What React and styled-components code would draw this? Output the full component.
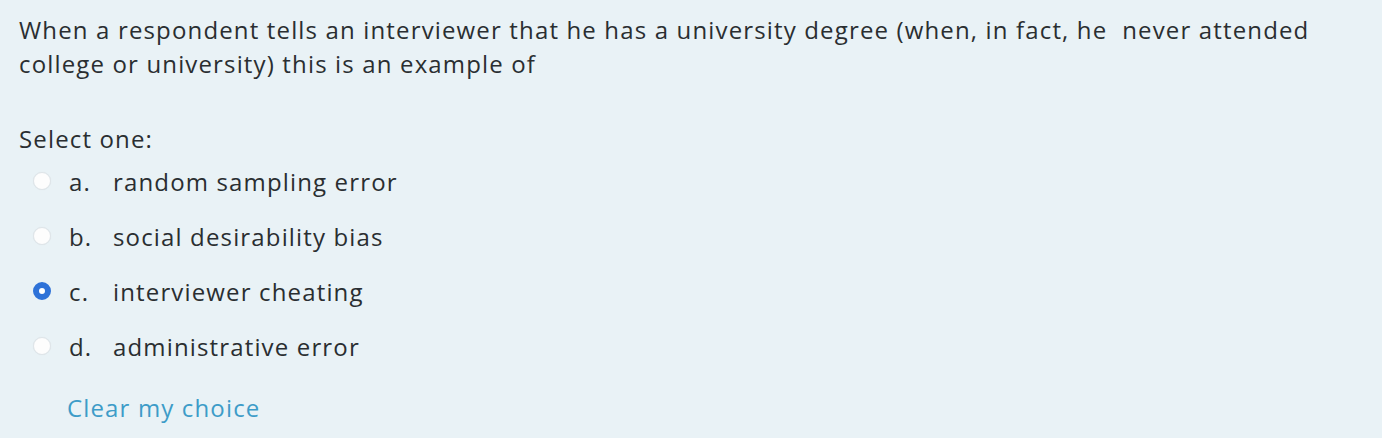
import React, { useState } from "react";
import styled, { createGlobalStyle } from "styled-components";

const GlobalStyle = createGlobalStyle`
  html, body {
    margin: 0;
    padding: 0;
    background: #e9f2f6;
  }
  body {
    font-family: "Open Sans", "Liberation Sans", sans-serif;
    color: #2a2e31;
  }
`;

const Question = styled.div`
  width: 1382px;
  height: 438px;
  box-sizing: border-box;
  padding: 13px 19px 0 19px;
  background: #e9f2f6;
`;

const Prompt = styled.p`
  margin: 0;
  font-size: 24px;
  line-height: 34px;
  letter-spacing: 1.15px;
  width: 1320px;
`;

const SelectLabel = styled.div`
  margin-top: 41px;
  font-size: 24px;
  line-height: 34px;
  letter-spacing: 1.15px;
`;

const Options = styled.div`
  display: flex;
  flex-direction: column;
  gap: 21px;
  margin-top: 8px;
  padding-left: 14px;
`;

const Option = styled.label`
  display: flex;
  align-items: center;
  height: 34px;
  font-size: 24px;
  letter-spacing: 1.15px;
  cursor: pointer;
`;

const Radio = styled.span`
  width: 18px;
  height: 18px;
  border-radius: 50%;
  box-sizing: border-box;
  flex-shrink: 0;
  margin-right: 18px;
  background: ${(p) => (p.checked ? "#fff" : "#fdfdfd")};
  border: ${(p) => (p.checked ? "6px solid #2e72d8" : "1px solid #dfe5e9")};
  box-shadow: ${(p) => (p.checked ? "none" : "0 0 1px rgba(0,0,0,0.08)")};
`;

const Letter = styled.span`
  width: 44px;
  flex-shrink: 0;
`;

const ClearLink = styled.a`
  display: inline-block;
  margin-top: 28px;
  margin-left: 48px;
  font-size: 24px;
  letter-spacing: 1.15px;
  color: #3d9cc8;
  text-decoration: none;
  cursor: pointer;
`;

const choices = [
  { key: "a", text: "random sampling error" },
  { key: "b", text: "social desirability bias" },
  { key: "c", text: "interviewer cheating" },
  { key: "d", text: "administrative error" },
];

const App = () => {
  const [picked, setPicked] = useState("c");

  return (
    <>
      <GlobalStyle />
      <Question>
        <Prompt>
          When a respondent tells an interviewer that he has a university
          degree (when, in fact, he&nbsp; never attended college or
          university) this is an example of
        </Prompt>
        <SelectLabel>Select one:</SelectLabel>
        <Options>
          {choices.map((c) => (
            <Option key={c.key} onClick={() => setPicked(c.key)}>
              <Radio checked={picked === c.key} />
              <Letter>{c.key}.</Letter>
              {c.text}
            </Option>
          ))}
        </Options>
        <ClearLink onClick={() => setPicked(null)}>Clear my choice</ClearLink>
      </Question>
    </>
  );
};

export default App;
